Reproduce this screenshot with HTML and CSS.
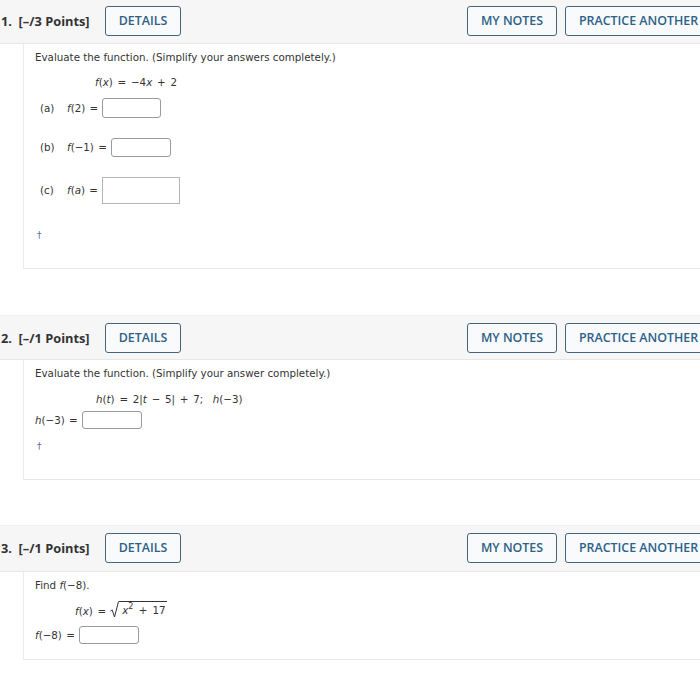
FILE: index.html
```html
<!DOCTYPE html>
<html>
<head>
<meta charset="utf-8">
<link rel="stylesheet" href="styles.css">
</head>
<body>
<div class="page">
  <section class="q q1">
    <div class="qhead">
      <span class="qnum">1.&nbsp; [–/3 Points]</span>
      <span class="btn details">DETAILS</span>
      <span class="spacer"></span>
      <span class="btn notes">MY NOTES</span>
      <span class="btn practice">PRACTICE ANOTHER</span>
    </div>
    <div class="qbody body1">
      <p class="prompt">Evaluate the function. (Simplify your answers completely.)</p>
      <p class="eq eq1"><i>f</i>(<i>x</i>) = −4<i>x</i> + 2</p>
      <div class="part pa"><span class="lbl">(a)</span><span class="expr"><i>f</i>(2) =</span><span class="box box-a"></span></div>
      <div class="part pb"><span class="lbl">(b)</span><span class="expr"><i>f</i>(−1) =</span><span class="box box-b"></span></div>
      <div class="part pc"><span class="lbl">(c)</span><span class="expr"><i>f</i>(<i>a</i>) =</span><span class="box box-c"></span></div>
      <p class="dagger">†</p>
    </div>
  </section>

  <section class="q q2">
    <div class="qhead">
      <span class="qnum">2.&nbsp; [–/1 Points]</span>
      <span class="btn details">DETAILS</span>
      <span class="spacer"></span>
      <span class="btn notes">MY NOTES</span>
      <span class="btn practice">PRACTICE ANOTHER</span>
    </div>
    <div class="qbody body2">
      <p class="prompt">Evaluate the function. (Simplify your answer completely.)</p>
      <p class="eq eq2"><i>h</i>(<i>t</i>) = 2|<i>t</i> − 5| + 7;&nbsp; <i>h</i>(−3)</p>
      <div class="ans ans2"><span class="expr"><i>h</i>(−3) =</span><span class="box box-s"></span></div>
      <p class="dagger">†</p>
    </div>
  </section>

  <section class="q q3">
    <div class="qhead">
      <span class="qnum">3.&nbsp; [–/1 Points]</span>
      <span class="btn details">DETAILS</span>
      <span class="spacer"></span>
      <span class="btn notes">MY NOTES</span>
      <span class="btn practice">PRACTICE ANOTHER</span>
    </div>
    <div class="qbody body3">
      <p class="prompt">Find <i>f</i>(−8).</p>
      <p class="eq eq3"><i>f</i>(<i>x</i>) = <span class="sqrt"><svg class="rad" width="9" height="17" viewBox="0 0 9 17"><polyline points="0.5,10 2.2,9 4.5,16 8.5,0.5" fill="none" stroke="#333" stroke-width="1"/></svg><span class="under"><i>x</i><sup>2</sup> + 17</span></span></p>
      <div class="ans ans3"><span class="expr"><i>f</i>(−8) =</span><span class="box box-s"></span></div>
    </div>
  </section>
</div>
</body>
</html>
```

FILE: styles.css
```css
html, body {
  margin: 0;
  padding: 0;
  background: #ffffff;
  overflow: hidden;
}
.page {
  width: 716px;
  font-family: "DejaVu Sans", Verdana, sans-serif;
  color: #333333;
}
p { margin: 0; }
i { font-style: italic; }

.q2 { margin-top: 46px; }
.q3 { margin-top: 45px; }

.qhead {
  display: flex;
  align-items: flex-start;
  height: 36px;
  padding-top: 7px;
  background: #f6f6f6;
  border-bottom: 1px solid #e6e6e6;
  border-top: 1px solid #efefef;
}
.q1 .qhead {
  height: 37px;
  padding-top: 6px;
  border-top: none;
}
.q3 .qhead { height: 38px; }

.qnum {
  font-family: "Open Sans", sans-serif;
  font-weight: 700;
  font-size: 12.8px;
  color: #333333;
  line-height: 30px;
  padding-left: 1px;
  width: 104px;
}
.btn {
  box-sizing: border-box;
  height: 30px;
  line-height: 28px;
  border: 1px solid #46647a;
  border-radius: 3px;
  background: #f8fafb;
  font-family: "Open Sans", sans-serif;
  font-weight: 600;
  font-size: 12.4px;
  color: #2d6187;
  white-space: nowrap;
}
.details { width: 76px; text-align: center; }
.spacer { flex: 1; }
.notes { width: 90px; text-align: center; margin-right: 8px; }
.practice { width: 151px; padding-left: 13px; }

.qbody {
  margin-left: 23px;
  border-left: 1px solid #ececec;
  border-bottom: 1px solid #e6e6e6;
  box-sizing: border-box;
  padding-left: 11px;
  font-size: 10.3px;
  line-height: 14px;
}
.body1 { height: 225px; padding-top: 6px; }
.body2 { height: 120px; padding-top: 6px; }
.body3 { height: 88px; padding-top: 6px; }

.prompt { height: 14px; }
.eq { word-spacing: 1.5px; }
.eq1 { margin-top: 11px; padding-left: 60px; }
.part {
  display: flex;
  align-items: center;
  padding-left: 5px;
}
.lbl { width: 27px; }
.expr { margin-right: 4px; word-spacing: 1px; }
.pa { margin-top: 8px; height: 22px; }
.pb { margin-top: 18px; height: 20px; }
.pc { margin-top: 19px; height: 28px; }

.box {
  display: inline-block;
  box-sizing: border-box;
  border: 1px solid #9a9a9a;
  border-radius: 3px;
  background: #fff;
}
.box-a { width: 59px; height: 20px; }
.box-b { width: 60px; height: 19px; }
.box-c { width: 78px; height: 27px; border-radius: 0; border-color: #b5b5b5; }
.box-s { width: 60px; height: 18px; }

.dagger { padding-left: 2px; color: #5a6a9a; font-size: 9px; }
.body1 .dagger { margin-top: 24px; }
.body2 .dagger { margin-top: 9px; }

.eq2 { margin-top: 12px; padding-left: 61px; }
.ans { display: flex; align-items: center; }
.ans2 { margin-top: 4px; height: 20px; }

.eq3 { margin-top: 8px; padding-left: 40px; height: 18px; display: flex; align-items: flex-end; }
.sqrt { display: inline-flex; align-items: flex-start; margin-left: 4px; }
.rad { display: block; }
.under {
  border-top: 1px solid #333;
  padding: 2px 1px 0 3px;
  line-height: 13px;
  word-spacing: 2px;
}
sup { font-size: 8px; vertical-align: 5px; line-height: 0; }
.ans3 { margin-top: 7px; height: 20px; }
```
